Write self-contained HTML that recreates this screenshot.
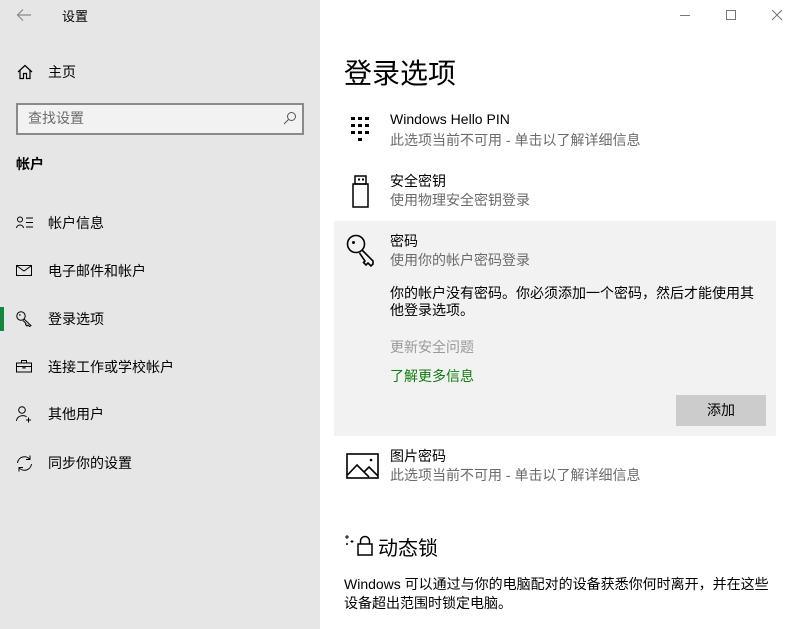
<!DOCTYPE html>
<html><head><meta charset="utf-8"><style>
*{margin:0;padding:0;box-sizing:border-box}
body{width:798px;height:629px;overflow:hidden;position:relative;background:#fff;font-family:"Liberation Sans","Noto Sans CJK SC",sans-serif;font-size:14px;color:#000}
.a{position:absolute;white-space:nowrap}
#side{position:absolute;left:0;top:0;width:320px;height:629px;background:#e6e6e6}
.g{color:#6b6b6b;font-size:14px}
svg{position:absolute;overflow:visible}
</style></head><body>
<div id="side">
<svg style="left:16px;top:8px" width="16" height="14" viewBox="0 0 16 14"><path d="M15 7H2M7 1.5L1.5 7 7 12.5" stroke="#8a8a8a" stroke-width="1.2" fill="none"/></svg>
<div class="a" style="left:62px;top:6px;font-size:13px">设置</div>
<svg style="left:17px;top:64px" width="16" height="16" viewBox="0 0 16 16"><path d="M1 8L8 1.5 15 8M3 6.5V14.5H6.5V9.5H9.5V14.5H13V6.5" stroke="#000" stroke-width="1.2" fill="none"/></svg>
<div class="a" style="left:48px;top:62px">主页</div>
<div class="a" style="left:16px;top:103px;width:288px;height:32px;border:2px solid #8a8a8a;background:#f2f2f2"></div>
<div class="a" style="left:28px;top:108px;color:#6b6b6b">查找设置</div>
<svg style="left:283px;top:111px" width="14" height="14" viewBox="0 0 14 14"><circle cx="8.5" cy="5.5" r="4" stroke="#555" fill="none"/><path d="M5.5 8.5L1 13" stroke="#555"/></svg>
<div class="a" style="left:16px;top:154px;font-weight:bold">帐户</div>
<svg style="left:16px;top:216px" width="18" height="14" viewBox="0 0 18 14"><circle cx="4" cy="3.5" r="2.5" stroke="#000" fill="none"/><path d="M0.5 12C1 8 7 8 7.5 12M10 2H17M10 6.5H17M10 11H17" stroke="#000" fill="none"/></svg>
<div class="a" style="left:48px;top:213px">帐户信息</div>
<svg style="left:16px;top:265px" width="17" height="12" viewBox="0 0 17 12"><rect x="0.5" y="0.5" width="15" height="10" stroke="#000" fill="none"/><path d="M1 1L8 6 15 1" stroke="#000" fill="none"/></svg>
<div class="a" style="left:48px;top:261px">电子邮件和帐户</div>
<div class="a" style="left:0;top:307px;width:4px;height:24px;background:#10893e"></div>
<svg style="left:16px;top:311px" width="17" height="16" viewBox="0 0 17 16"><circle cx="5" cy="5" r="4.2" stroke="#000" fill="none"/><circle cx="3.8" cy="4" r="0.8"/><path d="M8 8L15 14.5 13.5 15.5 12 14 11 15 9.5 13.5 10 12.5 7 9.5" stroke="#000" fill="none"/></svg>
<div class="a" style="left:48px;top:309px">登录选项</div>
<svg style="left:16px;top:360px" width="17" height="13" viewBox="0 0 17 13"><rect x="0.5" y="3" width="15" height="9" stroke="#000" fill="none"/><path d="M5.5 3V0.5H10.5V3M0.5 6.5H15.5M7 6V8H9V6" stroke="#000" fill="none"/></svg>
<div class="a" style="left:48px;top:357px">连接工作或学校帐户</div>
<svg style="left:16px;top:406px" width="17" height="17" viewBox="0 0 17 17"><circle cx="6" cy="4" r="3.3" stroke="#000" fill="none"/><path d="M0.5 15C1 9 9 8.5 10.5 11M12.5 11.5V16.5M10 14H15" stroke="#000" fill="none"/></svg>
<div class="a" style="left:48px;top:404px">其他用户</div>
<svg style="left:16px;top:455px" width="17" height="17" viewBox="0 0 17 17"><path d="M14 4.5A7 7 0 0 0 1.5 8M3 12.5A7 7 0 0 0 15.5 9M14 0.5V4.5H10M3 16.5V12.5H7" stroke="#000" fill="none"/></svg>
<div class="a" style="left:48px;top:453px">同步你的设置</div>
</div>
<svg style="left:680px;top:15px" width="10" height="2"><path d="M0 0.5H10" stroke="#777"/></svg>
<div class="a" style="left:726px;top:10px;width:10px;height:10px;border:1px solid #777"></div>
<svg style="left:772px;top:10px" width="10" height="10"><path d="M0 0L10 10M10 0L0 10" stroke="#777"/></svg>
<div class="a" style="left:344px;top:52px;font-size:28px">登录选项</div>
<svg style="left:351px;top:117px" width="22" height="28" viewBox="0 0 22 28"><g fill="#000"><rect x="0" y="0" width="4" height="3"/><rect x="7" y="0" width="4" height="3"/><rect x="14" y="0" width="4" height="3"/><rect x="0" y="7" width="4" height="3"/><rect x="7" y="7" width="4" height="3"/><rect x="14" y="7" width="4" height="3"/><rect x="0" y="14" width="4" height="3"/><rect x="7" y="14" width="4" height="3"/><rect x="14" y="14" width="4" height="3"/><rect x="7" y="21" width="4" height="3"/></g></svg>
<div class="a" style="left:390px;top:111px">Windows Hello PIN</div>
<div class="a g" style="left:390px;top:130px">此选项当前不可用 - 单击以了解详细信息</div>
<svg style="left:352px;top:175px" width="17" height="33" viewBox="0 0 17 33"><rect x="3" y="1" width="11" height="8" stroke="#000" stroke-width="1.5" fill="none"/><rect x="1" y="9" width="15" height="23" stroke="#000" stroke-width="1.5" fill="none"/><rect x="6" y="3.5" width="2" height="2"/><rect x="10" y="3.5" width="2" height="2"/></svg>
<div class="a" style="left:390px;top:171px">安全密钥</div>
<div class="a g" style="left:390px;top:190px">使用物理安全密钥登录</div>
<div class="a" style="left:334px;top:221px;width:442px;height:215px;background:#f2f2f2"></div>
<svg style="left:346px;top:234px" width="34" height="34" viewBox="0 0 34 34"><circle cx="10" cy="10" r="8.5" stroke="#000" stroke-width="1.6" fill="none"/><circle cx="7.5" cy="8.5" r="1.5"/><path d="M16 16L27 27 27 30 25 32 22 29 20 31 17.5 28.5 19 27 13.5 19" stroke="#000" stroke-width="1.6" fill="none"/></svg>
<div class="a" style="left:390px;top:231px">密码</div>
<div class="a g" style="left:390px;top:250px">使用你的帐户密码登录</div>
<div class="a" style="left:390px;top:283px">你的帐户没有密码。你必须添加一个密码，然后才能使用其</div>
<div class="a" style="left:390px;top:300px">他登录选项。</div>
<div class="a" style="left:390px;top:337px;color:#999">更新安全问题</div>
<div class="a" style="left:390px;top:366px;color:#107c10">了解更多信息</div>
<div class="a" style="left:676px;top:395px;width:90px;height:31px;background:#cccccc;text-align:center;line-height:31px">添加</div>
<svg style="left:346px;top:453px" width="33" height="26" viewBox="0 0 33 26"><rect x="1" y="1" width="31" height="24" stroke="#000" stroke-width="1.6" fill="none"/><path d="M1.5 22L11 12 23 24M18 19L23 14 32 23" stroke="#000" stroke-width="1.6" fill="none"/><circle cx="25" cy="7" r="1.3"/></svg>
<div class="a" style="left:390px;top:446px">图片密码</div>
<div class="a g" style="left:390px;top:465px">此选项当前不可用 - 单击以了解详细信息</div>
<svg style="left:344px;top:534px" width="30" height="22" viewBox="0 0 30 22"><path d="M3 1V5M1 3H5M8 6V9M6.5 7.5H9.5M3 9V11M2 10H4" stroke="#000" fill="none"/><rect x="14" y="10" width="14" height="11" stroke="#000" stroke-width="1.5" fill="none"/><path d="M16.5 10V7A4.5 4.5 0 0 1 25.5 7V10" stroke="#000" stroke-width="1.5" fill="none"/></svg>
<div class="a" style="left:378px;top:532px;font-size:20px">动态锁</div>
<div class="a" style="left:344px;top:574px">Windows 可以通过与你的电脑配对的设备获悉你何时离开，并在这些</div>
<div class="a" style="left:344px;top:593px">设备超出范围时锁定电脑。</div>
</body></html>
